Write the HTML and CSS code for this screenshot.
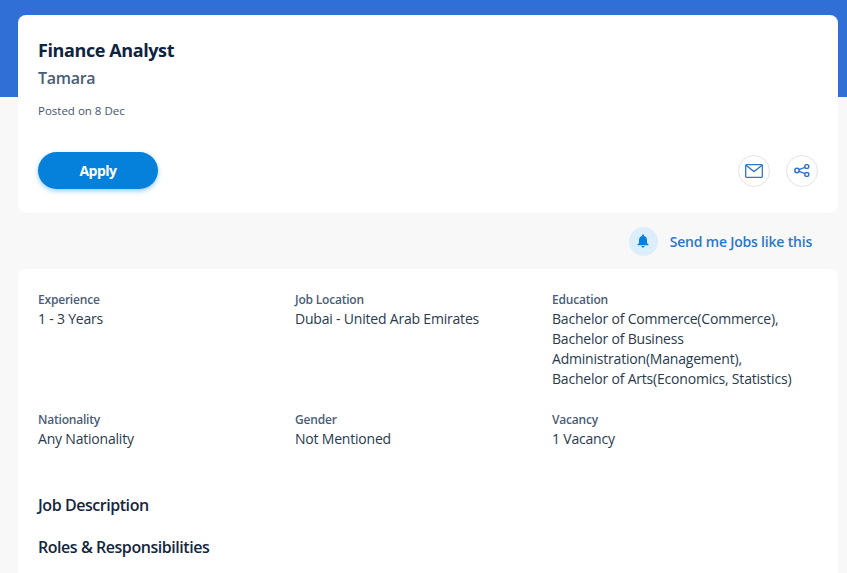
FILE: index.html
```html
<!DOCTYPE html>
<html lang="en">
<head>
<meta charset="utf-8">
<title>Finance Analyst</title>
<link rel="stylesheet" href="styles.css">
</head>
<body>
<div class="hero"></div>
<main class="page">
  <section class="card head">
    <h1 class="title">Finance Analyst</h1>
    <div class="company">Tamara</div>
    <div class="posted">Posted on 8 Dec</div>
    <div class="actions">
      <button class="apply">Apply</button>
      <div class="icons">
        <span class="round">
          <svg width="18" height="14" viewBox="0 0 18 14" fill="none" stroke="#2f76c9" stroke-width="1.3"><rect x="0.7" y="0.7" width="16.6" height="12.6" rx="0.8"/><path d="M1 1.2l8 6.4 8-6.4"/></svg>
        </span>
        <span class="round">
          <svg width="16" height="13" viewBox="0 0 16 13" fill="none" stroke="#2f76c9" stroke-width="1.5"><circle cx="3" cy="6.500" r="2.200"/><circle cx="12.800" cy="2.600" r="2"/><circle cx="12.800" cy="10.400" r="2"/><path d="M5 5.600l6-2.200M5 7.400l6 2.200"/></svg>
        </span>
      </div>
    </div>
  </section>
  <div class="alert">
    <span class="bell">
      <svg width="12" height="14" viewBox="0 0 12 14" fill="#0a80d8"><path d="M6 0.5c.6 0 1 .4 1 1v.5c2 .5 3 2.1 3 4v3l1.500 1.500v.7H.5v-.7L2 9V6c0-1.900 1-3.500 3-4v-.5c0-.6.4-1 1-1z"/><path d="M4.500 12h3c0 .9-.6 1.500-1.500 1.500S4.500 12.900 4.500 12z"/></svg>
    </span>
    <span class="alert-text">Send me Jobs like this</span>
  </div>
  <section class="card body">
    <div class="facts">
      <div class="fact"><div class="label">Experience</div><div class="value">1 - 3 Years</div></div>
      <div class="fact"><div class="label">Job Location</div><div class="value">Dubai - United Arab Emirates</div></div>
      <div class="fact"><div class="label">Education</div><div class="value">Bachelor of Commerce(Commerce),<br>Bachelor of Business Administration(Management),<br>Bachelor of Arts(Economics, Statistics)</div></div>
      <div class="fact"><div class="label">Nationality</div><div class="value">Any Nationality</div></div>
      <div class="fact"><div class="label">Gender</div><div class="value">Not Mentioned</div></div>
      <div class="fact"><div class="label">Vacancy</div><div class="value">1 Vacancy</div></div>
    </div>
    <h2 class="section first">Job Description</h2>
    <h2 class="section">Roles &amp; Responsibilities</h2>
  </section>
</main>
</body>
</html>
```
FILE: styles.css
```css
* { box-sizing: border-box; }
html, body { margin: 0; height: 100%; overflow: hidden; }
body {
  background: #f8f8f8;
  font-family: "Open Sans", "Noto Sans", sans-serif;
  color: #1f2d3d;
}
.hero { height: 97px; background: #2f6fd6; }
.page { margin-top: -82px; padding: 0 9px 0 18px; }
.card { background: #fff; border-radius: 8px; padding: 0 20px; }
.head { height: 198px; padding-top: 23px; }
.title { margin: 0; font-size: 18px; line-height: 24px; font-weight: 700; letter-spacing: -.4px; color: #0d2440; }
.company { margin-top: 5px; font-size: 16px; line-height: 22px; font-weight: 600; letter-spacing: -.3px; color: #4a5d78; }
.posted { margin-top: 14px; font-size: 11.5px; line-height: 16px; color: #46566e; }
.actions { margin-top: 33px; display: flex; justify-content: space-between; align-items: center; }
.apply {
  width: 120px; height: 37px; border: 0; border-radius: 19px;
  background: #0581dc; color: #fff;
  font: 700 14px "Open Sans", sans-serif;
  letter-spacing: -.5px;
  box-shadow: 0 2px 5px rgba(5, 129, 220, .4);
}
.icons { display: flex; gap: 16px; }
.round {
  width: 32px; height: 32px; border-radius: 50%;
  border: 1px solid #dfe5ec; background: #fff;
  display: flex; align-items: center; justify-content: center;
}
.alert { height: 56px; display: flex; justify-content: flex-end; align-items: center; padding-right: 26px; gap: 12px; }
.bell { width: 29px; height: 29px; border-radius: 50%; background: #dcedfb; display: flex; align-items: center; justify-content: center; }
.alert-text { font-size: 14px; font-weight: 600; letter-spacing: -.2px; color: #2f76c9; }
.body { height: 320px; padding-top: 22px; }
.facts { display: grid; grid-template-columns: 257px 257px 1fr; row-gap: 22px; }
.label { font-size: 12px; line-height: 17px; font-weight: 600; letter-spacing: -.2px; color: #4a5d78; }
.value { font-size: 14px; line-height: 20px; margin-top: 1px; letter-spacing: -.2px; color: #2a3a4e; }
.section { margin: 0; font-size: 16px; line-height: 22px; font-weight: 600; letter-spacing: -.45px; color: #14263e; margin-top: 20px; }
.section.first { margin-top: 45px; }
```
